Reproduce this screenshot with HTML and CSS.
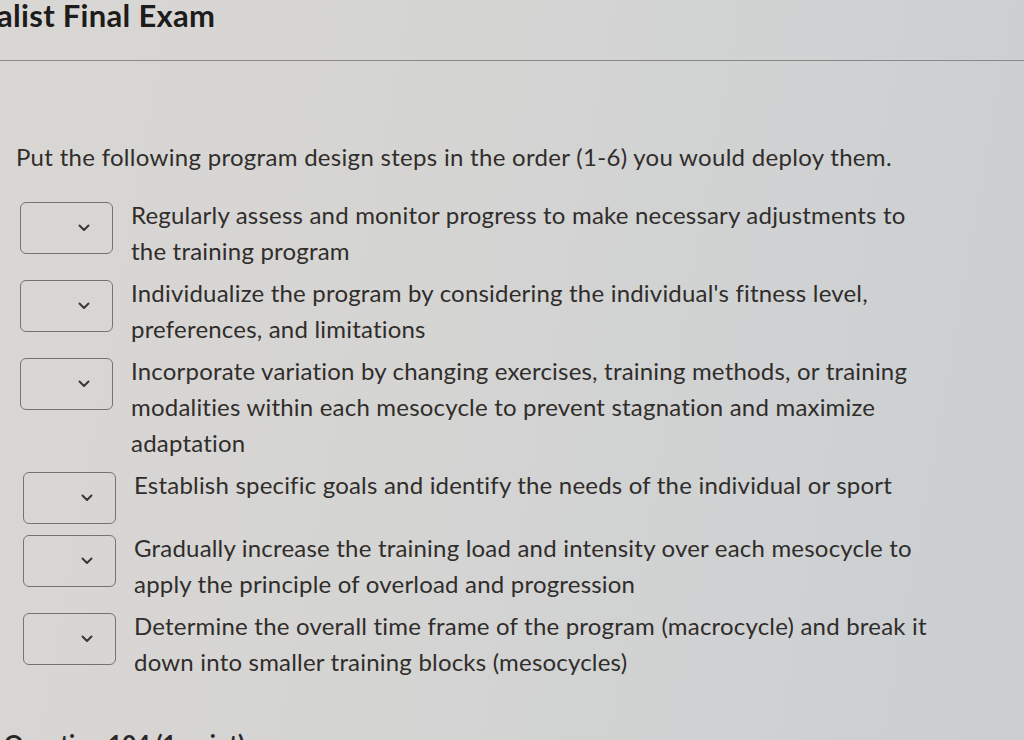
FILE: index.html
```html
<!DOCTYPE html>
<html lang="en">
<head>
    <meta charset="UTF-8">
    <meta name="viewport" content="width=device-width, initial-scale=1.0">
    <title>Final Exam</title>
    <link rel="stylesheet" href="styles.css">
</head>
<body>
    <header class="exam-header">
        <h1 class="exam-title">alist Final Exam</h1>
    </header>

    <section class="question">
        <p class="prompt">Put the following program design steps in the order (1-6) you would deploy them.</p>

        <div class="ordering">
            <div class="order-row">
                <div class="order-select"><svg class="chevron" viewBox="0 0 12 8"><path d="M1.5 1.5 L6 6 L10.5 1.5"/></svg></div>
                <div class="order-text">Regularly assess and monitor progress to make necessary adjustments to the training program</div>
            </div>
            <div class="order-row">
                <div class="order-select"><svg class="chevron" viewBox="0 0 12 8"><path d="M1.5 1.5 L6 6 L10.5 1.5"/></svg></div>
                <div class="order-text">Individualize the program by considering the individual's fitness level, preferences, and limitations</div>
            </div>
            <div class="order-row">
                <div class="order-select"><svg class="chevron" viewBox="0 0 12 8"><path d="M1.5 1.5 L6 6 L10.5 1.5"/></svg></div>
                <div class="order-text">Incorporate variation by changing exercises, training methods, or training modalities within each mesocycle to prevent stagnation and maximize adaptation</div>
            </div>
            <div class="order-row shift">
                <div class="order-select"><svg class="chevron" viewBox="0 0 12 8"><path d="M1.5 1.5 L6 6 L10.5 1.5"/></svg></div>
                <div class="order-text">Establish specific goals and identify the needs of the individual or sport</div>
            </div>
            <div class="order-row shift">
                <div class="order-select"><svg class="chevron" viewBox="0 0 12 8"><path d="M1.5 1.5 L6 6 L10.5 1.5"/></svg></div>
                <div class="order-text">Gradually increase the training load and intensity over each mesocycle to apply the principle of overload and progression</div>
            </div>
            <div class="order-row shift">
                <div class="order-select"><svg class="chevron" viewBox="0 0 12 8"><path d="M1.5 1.5 L6 6 L10.5 1.5"/></svg></div>
                <div class="order-text">Determine the overall time frame of the program (macrocycle) and break it down into smaller training blocks (mesocycles)</div>
            </div>
        </div>
    </section>

    <h2 class="next-question">Question 104 (1 point)</h2>
</body>
</html>
```

FILE: styles.css
```css
* {
    margin: 0;
    padding: 0;
    box-sizing: border-box;
}

body {
    font-family: Lato, 'Open Sans', sans-serif;
    font-variant-ligatures: none;
    height: 740px;
    overflow: hidden;
    color: #302d2b;
    background: linear-gradient(100deg, #d9d7d4 0%, #d4d4d3 45%, #cbcfd2 100%);
}

.exam-header {
    display: flow-root;
    height: 61px;
    border-bottom: 1px solid #8a8886;
}

.exam-title {
    font-size: 31px;
    font-weight: 700;
    letter-spacing: 0.3px;
    line-height: 36px;
    margin-top: -3px;
    margin-left: -3px;
    color: #1d1c1b;
}

.question {
    padding-left: 16px;
}

.prompt {
    font-size: 24px;
    letter-spacing: 0.3px;
    line-height: 36px;
    margin-top: 78px;
    margin-bottom: 22px;
}

.ordering {
    display: flex;
    flex-direction: column;
    gap: 6px;
    padding-left: 4px;
}

.order-row {
    display: flex;
    align-items: flex-start;
    gap: 18px;
}

.order-row.shift {
    padding-left: 3px;
}

.order-select {
    flex: none;
    width: 93px;
    height: 52px;
    margin-top: 5px;
    border: 1.5px solid #777371;
    border-radius: 6px;
    display: flex;
    align-items: center;
    justify-content: flex-end;
    padding-right: 22px;
}

.chevron {
    width: 12px;
    height: 8px;
    fill: none;
    stroke: #3a3736;
    stroke-width: 2;
    stroke-linecap: round;
    stroke-linejoin: round;
}

.order-text {
    font-size: 24px;
    letter-spacing: 0.2px;
    line-height: 36px;
    max-width: 810px;
}

.next-question {
    font-size: 24px;
    font-weight: 700;
    line-height: 30px;
    margin-top: 49px;
    padding-left: 4px;
    color: #2a2827;
}
```
